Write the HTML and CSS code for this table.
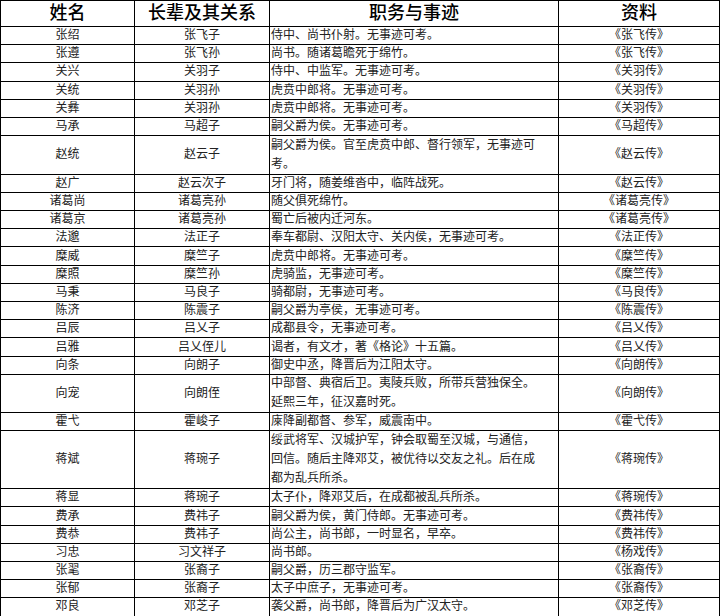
FILE: index.html
```html
<!DOCTYPE html>
<html lang="zh-CN">
<head>
<meta charset="utf-8">
<title>蜀汉名臣后代</title>
<link rel="stylesheet" href="styles.css">
</head>
<body>
<div class="sheet">
  <div class="row head"><div class="c">姓名</div><div class="c">长辈及其关系</div><div class="c">职务与事迹</div><div class="c">资料</div></div>
  <div class="row"><div class="c">张绍</div><div class="c">张飞子</div><div class="c l">侍中、尚书仆射。无事迹可考。</div><div class="c">《张飞传》</div></div>
  <div class="row"><div class="c">张遵</div><div class="c">张飞孙</div><div class="c l">尚书。随诸葛瞻死于绵竹。</div><div class="c">《张飞传》</div></div>
  <div class="row"><div class="c">关兴</div><div class="c">关羽子</div><div class="c l">侍中、中监军。无事迹可考。</div><div class="c">《关羽传》</div></div>
  <div class="row"><div class="c">关统</div><div class="c">关羽孙</div><div class="c l">虎贲中郎将。无事迹可考。</div><div class="c">《关羽传》</div></div>
  <div class="row"><div class="c">关彝</div><div class="c">关羽孙</div><div class="c l">虎贲中郎将。无事迹可考。</div><div class="c">《关羽传》</div></div>
  <div class="row"><div class="c">马承</div><div class="c">马超子</div><div class="c l">嗣父爵为侯。无事迹可考。</div><div class="c">《马超传》</div></div>
  <div class="row h2"><div class="c">赵统</div><div class="c">赵云子</div><div class="c l">嗣父爵为侯。官至虎贲中郎、督行领军，无事迹可<br>考。</div><div class="c">《赵云传》</div></div>
  <div class="row"><div class="c">赵广</div><div class="c">赵云次子</div><div class="c l">牙门将，随姜维沓中，临阵战死。</div><div class="c">《赵云传》</div></div>
  <div class="row"><div class="c">诸葛尚</div><div class="c">诸葛亮孙</div><div class="c l">随父俱死绵竹。</div><div class="c">《诸葛亮传》</div></div>
  <div class="row"><div class="c">诸葛京</div><div class="c">诸葛亮孙</div><div class="c l">蜀亡后被内迁河东。</div><div class="c">《诸葛亮传》</div></div>
  <div class="row"><div class="c">法邈</div><div class="c">法正子</div><div class="c l">奉车都尉、汉阳太守、关内侯，无事迹可考。</div><div class="c">《法正传》</div></div>
  <div class="row"><div class="c">糜威</div><div class="c">糜竺子</div><div class="c l">虎贲中郎将。无事迹可考。</div><div class="c">《糜竺传》</div></div>
  <div class="row"><div class="c">糜照</div><div class="c">糜竺孙</div><div class="c l">虎骑监，无事迹可考。</div><div class="c">《糜竺传》</div></div>
  <div class="row"><div class="c">马秉</div><div class="c">马良子</div><div class="c l">骑都尉，无事迹可考。</div><div class="c">《马良传》</div></div>
  <div class="row"><div class="c">陈济</div><div class="c">陈震子</div><div class="c l">嗣父爵为亭侯，无事迹可考。</div><div class="c">《陈震传》</div></div>
  <div class="row"><div class="c">吕辰</div><div class="c">吕乂子</div><div class="c l">成都县令，无事迹可考。</div><div class="c">《吕乂传》</div></div>
  <div class="row"><div class="c">吕雅</div><div class="c">吕乂侄儿</div><div class="c l">谒者，有文才，著《格论》十五篇。</div><div class="c">《吕乂传》</div></div>
  <div class="row"><div class="c">向条</div><div class="c">向朗子</div><div class="c l">御史中丞，降晋后为江阳太守。</div><div class="c">《向朗传》</div></div>
  <div class="row h2b"><div class="c">向宠</div><div class="c">向朗侄</div><div class="c l">中部督、典宿后卫。夷陵兵败，所带兵营独保全。<br>延熙三年，征汉嘉时死。</div><div class="c">《向朗传》</div></div>
  <div class="row"><div class="c">霍弋</div><div class="c">霍峻子</div><div class="c l">庲降副都督、参军，威震南中。</div><div class="c">《霍弋传》</div></div>
  <div class="row h3"><div class="c">蒋斌</div><div class="c">蒋琬子</div><div class="c l">绥武将军、汉城护军，钟会取蜀至汉城，与通信，<br>回信。随后主降邓艾，被优待以交友之礼。后在成<br>都为乱兵所杀。</div><div class="c">《蒋琬传》</div></div>
  <div class="row"><div class="c">蒋显</div><div class="c">蒋琬子</div><div class="c l">太子仆，降邓艾后，在成都被乱兵所杀。</div><div class="c">《蒋琬传》</div></div>
  <div class="row"><div class="c">费承</div><div class="c">费祎子</div><div class="c l">嗣父爵为侯，黄门侍郎。无事迹可考。</div><div class="c">《费祎传》</div></div>
  <div class="row"><div class="c">费恭</div><div class="c">费祎子</div><div class="c l">尚公主，尚书郎，一时显名，早卒。</div><div class="c">《费祎传》</div></div>
  <div class="row"><div class="c">习忠</div><div class="c">习文祥子</div><div class="c l">尚书郎。</div><div class="c">《杨戏传》</div></div>
  <div class="row"><div class="c">张毣</div><div class="c">张裔子</div><div class="c l">嗣父爵，历三郡守监军。</div><div class="c">《张裔传》</div></div>
  <div class="row"><div class="c">张郁</div><div class="c">张裔子</div><div class="c l">太子中庶子，无事迹可考。</div><div class="c">《张裔传》</div></div>
  <div class="row"><div class="c">邓良</div><div class="c">邓芝子</div><div class="c l">袭父爵，尚书郎，降晋后为广汉太守。</div><div class="c">《邓芝传》</div></div>
</div>
</body>
</html>
```

FILE: styles.css
```css
html, body {
  margin: 0;
  padding: 0;
  background: #fff;
}

.sheet {
  width: 718px;
  padding: 1px;
  background: #000;
  display: flex;
  flex-direction: column;
  gap: 1px;
  font-family: "Liberation Serif", "Noto Sans CJK SC", serif;
  font-size: 12px;
  color: #222;
}

.row {
  display: grid;
  grid-template-columns: 133px 134px 288px 160px;
  gap: 1px;
  height: 17.2px;
}

.row.head { height: 25px; }
.row.h2 { height: 37.6px; }
.row.h2b { height: 37px; }
.row.h3 { height: 57.3px; }

.c {
  background: #fff;
  display: flex;
  align-items: center;
  justify-content: center;
  text-align: center;
  line-height: 19px;
  white-space: nowrap;
  overflow: hidden;
}

.c.l {
  justify-content: flex-start;
  text-align: left;
  padding-left: 1px;
}

.head .c {
  font-size: 18px;
  font-weight: 500;
  color: #000;
  line-height: 25px;
}
```
